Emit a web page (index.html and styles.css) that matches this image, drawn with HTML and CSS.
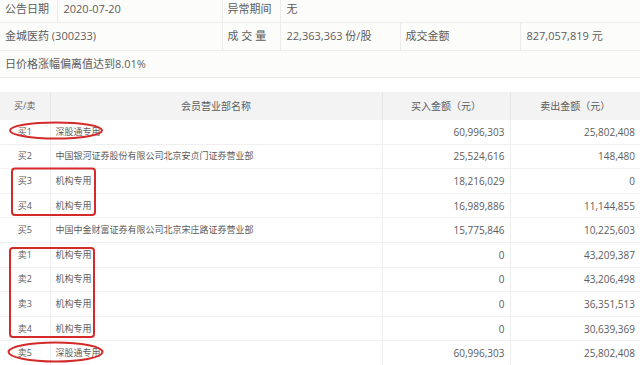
FILE: index.html
```html
<!DOCTYPE html>
<html lang="zh-CN">
<head>
    <meta charset="UTF-8">
    <title>龙虎榜 - 金城医药</title>
    <link rel="stylesheet" href="styles.css">
</head>
<body>
    <div class="page">
        <table class="info">
            <tr class="row-first">
                <td class="label">公告日期</td>
                <td class="value">2020-07-20</td>
                <td class="label">异常期间</td>
                <td class="value" colspan="3">无</td>
            </tr>
            <tr class="row-second">
                <td class="label" colspan="2">金城医药 (300233)</td>
                <td class="label">成 交 量</td>
                <td class="value">22,363,363 份/股</td>
                <td class="label">成交金额</td>
                <td class="value">827,057,819 元</td>
            </tr>
            <tr class="row-third">
                <td class="label" colspan="6">日价格涨幅偏离值达到8.01%</td>
            </tr>
        </table>

        <table class="trades">
            <thead>
                <tr>
                    <th class="side">买/卖</th>
                    <th>会员营业部名称</th>
                    <th class="amount">买入金额（元）</th>
                    <th class="amount">卖出金额（元）</th>
                </tr>
            </thead>
            <tbody>
                <tr><td class="side">买1</td><td class="name">深股通专用</td><td class="num">60,996,303</td><td class="num">25,802,408</td></tr>
                <tr><td class="side">买2</td><td class="name">中国银河证券股份有限公司北京安贞门证券营业部</td><td class="num">25,524,616</td><td class="num">148,480</td></tr>
                <tr><td class="side">买3</td><td class="name">机构专用</td><td class="num">18,216,029</td><td class="num">0</td></tr>
                <tr><td class="side">买4</td><td class="name">机构专用</td><td class="num">16,989,886</td><td class="num">11,144,855</td></tr>
                <tr><td class="side">买5</td><td class="name">中国中金财富证券有限公司北京宋庄路证券营业部</td><td class="num">15,775,846</td><td class="num">10,225,603</td></tr>
                <tr><td class="side">卖1</td><td class="name">机构专用</td><td class="num">0</td><td class="num">43,209,387</td></tr>
                <tr><td class="side">卖2</td><td class="name">机构专用</td><td class="num">0</td><td class="num">43,206,498</td></tr>
                <tr><td class="side">卖3</td><td class="name">机构专用</td><td class="num">0</td><td class="num">36,351,513</td></tr>
                <tr><td class="side">卖4</td><td class="name">机构专用</td><td class="num">0</td><td class="num">30,639,369</td></tr>
                <tr><td class="side">卖5</td><td class="name">深股通专用</td><td class="num">60,996,303</td><td class="num">25,802,408</td></tr>
            </tbody>
        </table>

        <!-- red marks drawn over the screenshot -->
        <svg class="marks" width="640" height="365" viewBox="0 0 640 365">
            <ellipse cx="56" cy="130.5" rx="46" ry="8" />
            <rect x="12" y="168.5" width="83" height="46.5" rx="3" />
            <rect x="10" y="248" width="84" height="89" rx="3" />
            <ellipse cx="55.5" cy="352" rx="47" ry="9.5" />
        </svg>
    </div>
</body>
</html>
```

FILE: styles.css
```css
* {
    margin: 0;
    padding: 0;
    box-sizing: border-box;
}

body {
    font-family: "Open Sans", "Noto Sans CJK SC", sans-serif;
    font-size: 11px;
    line-height: 14px;
    color: #5c5c5c;
    background: #fff;
    width: 640px;
    height: 365px;
    overflow: hidden;
}

.page {
    position: relative;
}

table {
    width: 640px;
    border-collapse: collapse;
    table-layout: fixed;
}

td, th {
    font-weight: normal;
    white-space: nowrap;
    overflow: hidden;
}

/* top info block */
.info {
    background: #fcfcfa;
}

.info td {
    padding: 0 6px;
    border-bottom: 1px solid #ececea;
    border-right: 1px solid #ececea;
}

.info td:last-child {
    border-right: none;
}

.info .label {
    padding-left: 5px;
}

.info .row-first td {
    height: 22px;
    padding-bottom: 4px;
}

.info .row-second td {
    height: 28px;
}

.info .row-third td {
    height: 27px;
}

.info .row-first td:nth-child(1) { width: 57px; }
.info .row-first td:nth-child(2) { width: 165px; }
.info .row-first td:nth-child(3) { width: 58px; }

.info .row-second td:nth-child(4) { width: 123px; }
.info .row-second td:nth-child(5) { width: 126px; }

/* trades table */
.trades {
    margin-top: 14px;
}

.trades th {
    height: 28px;
    font-size: 10px;
    background: #f3f3f3;
    border-right: 1px solid #e6e6e6;
    text-align: center;
}

.trades th:last-child {
    border-right: none;
}

.trades th.side { width: 50px; }
.trades th:nth-child(2) { width: 332px; }
.trades th.amount:nth-child(3) { width: 128px; }

.trades td {
    height: 24.6px;
    border-bottom: 1px solid #efefef;
    border-right: 1px solid #efefef;
}

.trades td:last-child {
    border-right: none;
}

.trades .side {
    font-size: 9px;
    text-align: center;
}

.trades .name {
    font-size: 9px;
    padding-left: 5px;
}

.trades .num {
    font-size: 10px;
    text-align: right;
    padding-right: 5px;
}

.marks {
    position: absolute;
    left: 0;
    top: 0;
    pointer-events: none;
}

.marks ellipse,
.marks rect {
    fill: none;
    stroke: #d42a2a;
    stroke-width: 2;
}
```
